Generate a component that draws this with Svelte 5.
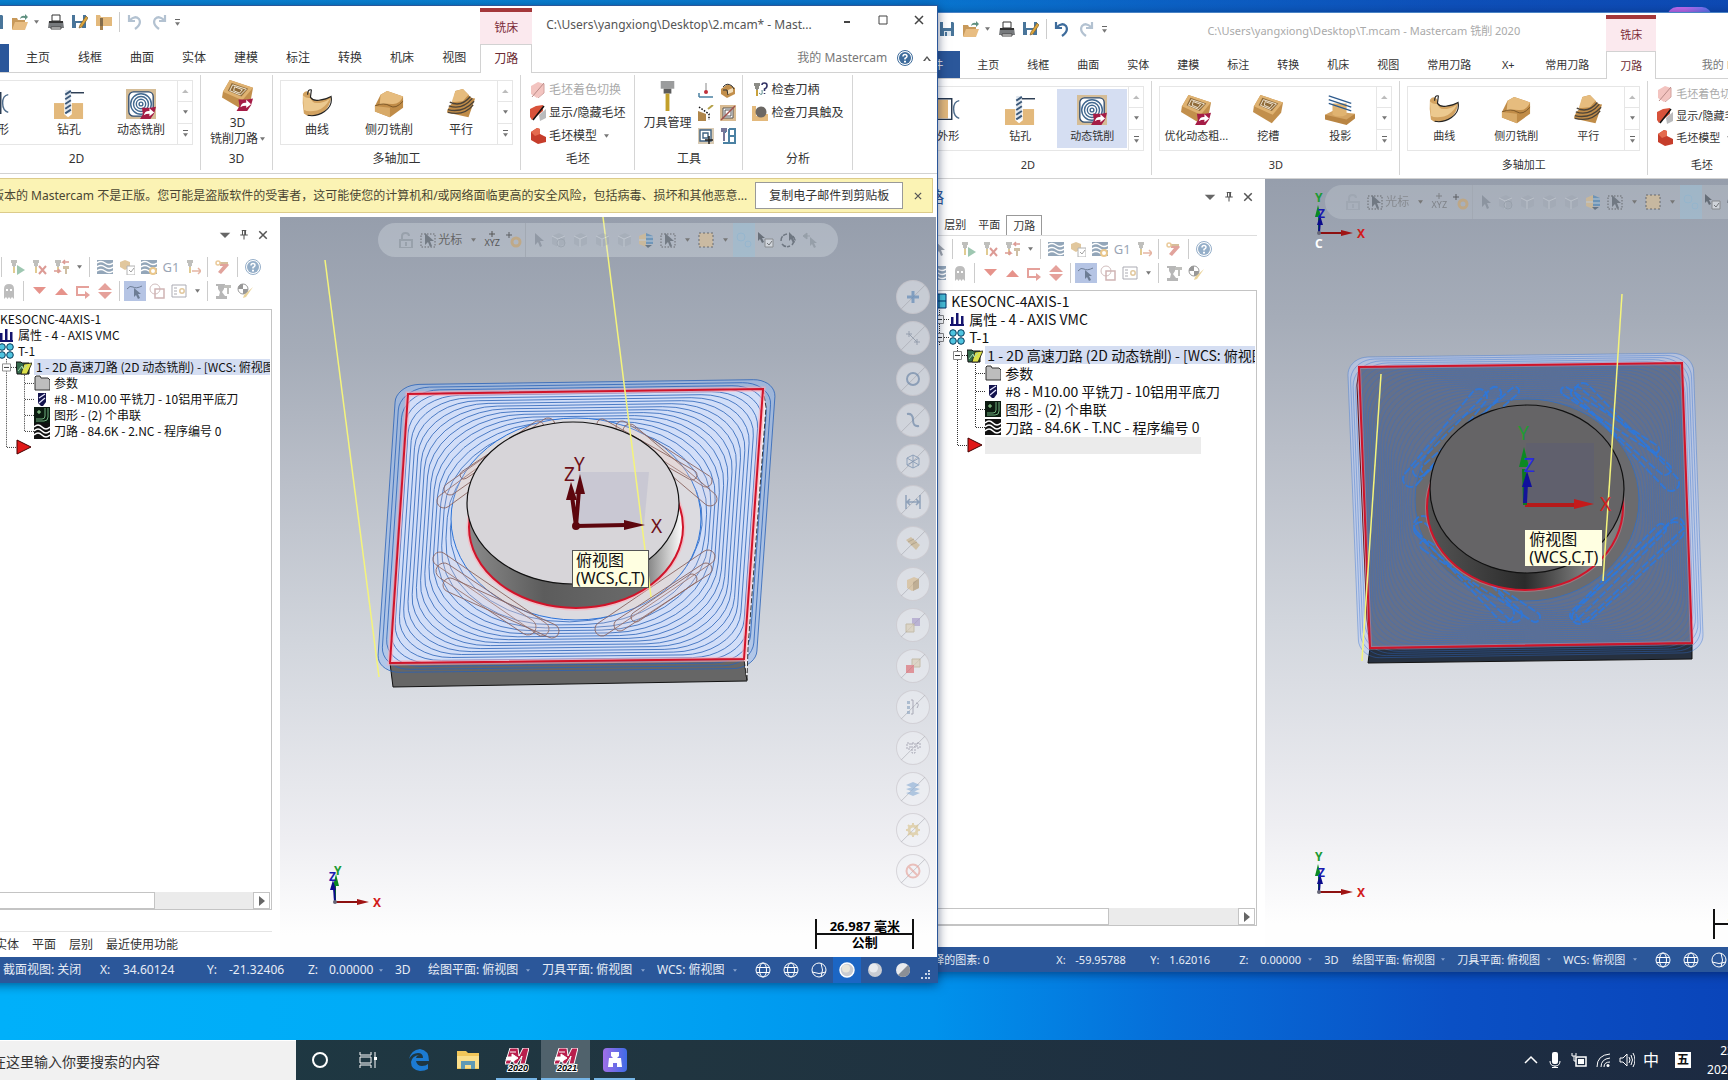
<script>
  const tan = '#e3b97c';
  const badge = '<path d="M17 20h9l6-1-2 7-4 6H15l3-5z" fill="#a51c46"/><path d="M19 28q1-5 6-4.500v-3l5 4.500-5 4v-2.500q-4 0-6 1.500z" fill="#fff"/>';
  const pocket = '<path d="M8 0 32 8 30 19 20 30 0 18 1 12z" fill="#c28f4c"/><path d="M8 0 32 8 21 21 1 12z" fill="#dfb271"/><path d="M10 3 27 9 20 17 6 11z" fill="#8f6b3a"/><path d="M11 5 25 9.500 19 15.500 8 11zM13 7l8 3-3 3.500-6-2.500z" fill="none" stroke="#f3ead8"/>';
  const bit = '<path d="M2 1h6v3H7v3H6v7H4V7H3V4H2z" fill="#8c8c86"/><path d="M4 8h2v6H4z" fill="#c9a13a"/>';
  const waves = '<path d="M0 1h16v14H0z" fill="#3c5f80"/><path d="M0 4q4-3 8 0t8 0M0 8q4-3 8 0t8 0M0 12q4-3 8 0t8 0" fill="none" stroke="#fff" stroke-width="1.500"/>';
  const cube = '<path d="M2 4 9 1l6 3v8l-7 3-6-3z" fill="#9aa3ad"/><path d="M8 7v8M2 4l6 3 7-3" stroke="#dfe3e8" fill="none"/>';
  const pointer = '<path d="M6 1v12l3-3 2 5 2-1-2-5h4z" fill="#5a6470"/>';

  const icons = {
    save: '<path d="M1 1h13l1 1v13H1z" fill="#49759a"/><path d="M4 1h8v6H4z" fill="#fff"/><path d="M5 10h7v5H5z" fill="#dfe8ef"/><path d="M6 11h2v4H6z" fill="#49759a"/>',
    open: '<path d="M0 4h5l1 2h7v3H4l-3 6H0z" fill="#c8995a"/><path d="M3 8h13l-3 8H0z" fill="#e8bd82"/><path d="M8 5q1-4 5-3V0l3 3-3 3V4q-3-1-5 1z" fill="#5f9080"/>',
    print: '<path d="M4 1h8v6H4z" fill="#fff" stroke="#333"/><path d="M1 7h14l1 7H0z" fill="#76797c"/><path d="M1 7h14v2H1z" fill="#333"/><path d="M3 13h10v2H3z" fill="#fff" stroke="#444"/>',
    saveas: '<path d="M0 1h14v13H0z" fill="#49759a"/><path d="M3 1h8v6H3zM4 9h6v5H4z" fill="#fff"/><path d="m14 2 2 2-6 9-3 1 1-3z" fill="#e0a63a" stroke="#7b6336" stroke-width=".7"/>',
    zip: '<path d="M0 1h4l1 2h11v9H0z" fill="#e3b97c"/><path d="M4 4h3v12H4z" fill="#a8834f"/><path d="M4 5h3M4 7h3M4 9h3M4 11h3" stroke="#5f5546"/>',
    undo: '<path d="M2 1v6h6M3 6q5-5 9-1 3 5-4 10" fill="none" stroke="currentColor" stroke-width="2.200"/>',
    redo: '<path d="M14 1v6H8M13 6Q8 1 4 5q-3 5 4 10" fill="none" stroke="#b3c2d1" stroke-width="2.200"/>',
    help: '<circle cx="8" cy="8" r="7.500" fill="#fff" stroke="#3e6c9c"/><circle cx="8" cy="8" r="6" fill="#3e6c9c"/><path d="M6 6.500q0-2 2-2t2 1.800Q10 7.500 8 8.500V9.500" fill="none" stroke="#fff" stroke-width="1.500"/><path d="M7 10.800h2v1.600H7z" fill="#fff"/>',
    pin: '<path d="M5 2h6M6 2v6M10 2v6M9 2v6M3 8h10M8 8v6" fill="none" stroke="#555" stroke-width="1.400"/>',
    cross: '<path d="m3 3 10 10M13 3 3 13" stroke="#555" stroke-width="2"/>',
    caret: '<path d="M1 5h14L8 12z" fill="#666"/>',
    // small ribbon icons
    shade: '<path d="M1 4 8 0l6 2v9l-7 5-6-4z" fill="#f3c4c0"/><path d="M8 16 14 11V2" fill="none" stroke="#d2a29e"/><path d="m2 15 12-14" stroke="#b98b88"/>',
    show: '<path d="M0 4 6 1l7-1v6L2 15l-2-3z" fill="#d8523a"/><path d="m9 10 7-6v9l-6 3z" fill="#b9babc"/><path d="M3 15 14 1" stroke="#111" stroke-width="1.500"/>',
    model: '<path d="M1 4 7 0l3 1v5l6 3v5l-8 2-7-4z" fill="#c63d2b"/><path d="m1 4 6-4 3 1v5L5 8z" fill="#e46a4e"/>',
    probe: '<path d="M1 15h14M1 11v4" stroke="#4b81a3" fill="none" stroke-width="1.500"/><path d="M8 1v8" stroke="#888"/><circle cx="8" cy="10" r="2" fill="#c0303a"/>',
    fixture: '<path d="m1 7 7-5 7 4v6l-8 4-6-4z" fill="#c28f4c"/><path d="M3 5q4-5 9-1l2 3M3 8h4l1 5" stroke="#333" fill="none"/><path d="m8 8 5-2v4l-5 2z" fill="#f1dcb8"/>',
    chamfer: '<path d="m0 6 8 3v7H0z" fill="#b0864a"/><path d="m1 2 10 7v6" stroke="#111" stroke-dasharray="1.500 1.500" fill="none" stroke-width="1.500"/><path d="m10 4 5-4" stroke="#b5a14a" stroke-width="2"/>',
    trim: '<path d="M0 0h16v16H0z" fill="#d9bb92"/><path d="M3 3h10v10H3zM5 5h6v6H5z" fill="#fff" stroke="#555"/><path d="M1 15 15 1" stroke="#a0504a" stroke-width="1.500"/>',
    nest: '<path d="M0 0h16v16H0z" fill="#d9cbb4"/><path d="M2 2h11v11H2zM5 5h5v5H5z" fill="#fff" stroke="#3f6282" stroke-width="1.400"/><path d="M11 8v8M7 12h8" stroke="#222" stroke-width="1.500"/>',
    holder: '<path d="M1 0h6v4H5v9H3V4H1z" fill="#779"/><path d="M5 4h1M9 1h6v14H3M9 1v14M9 8h6" fill="none" stroke="#4b81a3" stroke-width="2"/>',
    checkholder: bit + '<path d="M7 11q4 4 3-3" stroke="#588" fill="none"/><path d="M10 3q0-2 2.500-2T15 3.500 12.500 7v2M12.500 11v1" stroke="#336" stroke-width="1.600" fill="none"/>',
    checkreach: '<path d="M0 1h4v10h4v-2h8v7H0z" fill="#e3b97c"/><circle cx="9" cy="7" r="5.500" fill="#6b6763"/>',
    // manager toolbar
    cursor: pointer,
    regen: bit + '<path d="m8 6 8 5-8 5z" fill="#4f9a72"/>',
    regenx: bit + '<path d="m8 7 7 8M15 7l-7 8" stroke="#c04a40" stroke-width="2"/>',
    regenall: bit + '<path d="M16 3h-6l2-2M10 3l2 2M1 12h6l-2-2M7 12l-2 2" stroke="#c04a40" fill="none" stroke-width="1.500"/><path d="M10 7h6v3h-2v5h-2v-5h-2z" fill="#a88c5a"/>',
    waves,
    verify: '<path d="m1 3 5-2 5 2v5l-5 3-5-3z" fill="#c99a4e"/><path d="M8 7h8v9H8z" fill="#fff" stroke="#777"/><path d="m10 11 2 2 3-4" stroke="#555" fill="none"/>',
    wavegear: waves + '<circle cx="12" cy="12" r="3" fill="#fff" stroke="#d99a2e" stroke-width="2"/>',
    next: bit + '<path d="M7 12h9M13 9l3 3-3 3" stroke="#d07a5a" stroke-width="1.500" fill="none"/>',
    hammer: '<path d="M5 4h7l2 2-8 9-3-2 5-6H5z" fill="#c9584c"/><path d="M5 4h8" stroke="#b58a4a" stroke-width="2"/><circle cx="3" cy="4" r="2" fill="#fff" stroke="#d9a04a" stroke-width="1.500"/>',
    ghost: '<path d="M3 16V6q0-5 5-5t5 5v10l-2-2-1.500 2L8 14l-1.500 2L5 14z" fill="#888"/><path d="M5 6h2v2H5zM9 6h2v2H9z" fill="#fff"/>',
    down: '<path d="M2 4h13L8.500 11z" fill="#d23b2e"/>',
    up: '<path d="M2 12h13L8.500 5z" fill="#d23b2e"/>',
    bracket: '<path d="M14 4H2v8h9" fill="none" stroke="#d0564a" stroke-width="2"/><path d="m10 8 5 4-5 4z" fill="#d0564a"/>',
    updown: '<path d="M1 7h14L8 0zM1 9h14l-7 7z" fill="#d0564a"/>',
    pickpath: '<path d="M0 6q3-4 6-2t9-1" stroke="#345" fill="none"/><path d="M7 5v9l2-2 2 4 2-1-2-4h3z" fill="#345"/>',
    shapes: '<circle cx="6" cy="6" r="5" fill="none" stroke="#a88"/><path d="M6 6h9v9H6z" fill="none" stroke="#a77" stroke-width="1.500"/>',
    listgear: '<path d="M1 2h14v12H1z" fill="none" stroke="#667"/><path d="M3 5h3M3 8h3M3 11h3" stroke="#667"/><circle cx="11" cy="8" r="2.200" fill="none" stroke="#c99a4e" stroke-width="1.500"/>',
    machine: '<path d="M1 1h9v2H9v3l-2 3 3 4h2v3H1v-3h3l1-4-2-3V3H1z" fill="#7d7d7d"/><path d="M9 2h7v3h-2v6h-2V5H9z" fill="#8c8c86"/>',
    measure: '<circle cx="6" cy="6" r="5" fill="#fff" stroke="#444"/><path d="M6 1v5H1q0-5 5-5M6 11V6h5q0 5-5 5" fill="#444"/><path d="m16 4-7 10-3 1 1-3z" fill="#d9b04a"/>',
    // tree
    treemachine: '<path d="M1 1h14v14H1z" fill="#49c3dc" stroke="#036"/><path d="M1 8h14M8 1v14" stroke="#036"/>',
    bars: '<path d="M1 13h14v2H1zM2 6h2.500v8H2zM7 2h2.500v12H7zM12 5h2.500v9H12z" fill="#14146e"/>',
    cells: '<g fill="#4fc4e0" stroke="#063a5a"><circle cx="4" cy="4" r="3.300"/><circle cx="12" cy="4" r="3.300"/><circle cx="4" cy="12" r="3.300"/><circle cx="12" cy="12" r="3.300"/></g>',
    opfolder: '<path d="M0 3h5l1 1h7v11H1z" fill="#346b4c" stroke="#111"/><path d="m8 5 8-1-5 11H5z" fill="#dce04a" stroke="#111" stroke-width=".8"/><path d="M2 12 6 7l1 3 4-4" stroke="#a8d8b0" fill="none"/>',
    folder: '<path d="M1 4V2l1-1h4l1 2h7l2 2v10H1z" fill="#bdbdbd" stroke="#333"/>',
    tool: '<path d="M4 2h8v9l-3 4H7l-3-3z" fill="#14144e"/><path d="m5 7 6-4M5 12l6-5" stroke="#e8e8ff" stroke-width="1.200"/>',
    geometry: '<path d="M0 0h16v16H0z" fill="#0b1a10"/><path d="M11 1v8q0 3-3 3H2M14 1v9q0 4-4 4H2" stroke="#6fae7c" fill="none"/><path d="M3 5h4M5 3v4" stroke="#9d9"/>',
    nc: '<path d="M0 0h16v16H0z" fill="#111"/><path d="M0 4q4-4 8 0t8 0M0 8q4-4 8 0t8 0M0 12q4-4 8 0t8 0" fill="none" stroke="#fff" stroke-width="1.600"/>',
    insert: '<path d="m1 1 14 7-14 7z" fill="#e11818" stroke="#400"/>',
    // selection bar
    lock: '<path d="M4 8V4q0-3 3.500-3T11 4M2 8h12v8H2z" fill="none" stroke="#8d96a0" stroke-width="2"/><path d="M7 10h2v4H7z" fill="#8d96a0"/>',
    boxcursor: '<path d="M1 2h14v13H1z" fill="none" stroke="#444" stroke-dasharray="1.500 1.500"/><path d="M5 1v12l3-3 2 5 2-1-2-5h4z" fill="#555d66"/>',
    plusgear: '<path d="M3 0v6M0 3h6" stroke="#333"/><circle cx="10" cy="10" r="4" fill="none" stroke="#c9a36a" stroke-width="3"/>',
    wand: pointer,
    cubeA: cube,
    cubeoff: cube + '<circle cx="11" cy="11" r="4" fill="none" stroke="#7d8790"/>',
    cubecolor: '<path d="m1 4 7-3v7H1zM1 8h7v7l-7-3z" fill="#d8bb8a"/><path d="m8 1 7 3v8H8z" fill="#4f86b5"/><path d="M8 5h7M8 9h7M1 8h7" stroke="#c9d8e5"/><path d="M7 13h7l-4 3z" fill="#456"/>',
    selrect: '<path d="M1 1h14v14H1z" fill="#d9bd92" stroke="#444" stroke-dasharray="2 2"/>',
    faint: '<circle cx="5" cy="5" r="4" fill="none" stroke="#8fb5d0"/><circle cx="12" cy="12" r="3" fill="none" stroke="#8fb5d0"/>',
    validate: '<path d="M0 0v9l2-2 2 4 2-1-2-4h3z" fill="#444c55"/><path d="M7 7h8v8H7z" fill="#e4e7ea" stroke="#777"/><path d="m9 11 2 2 3-4" stroke="#555" fill="none"/>',
    cycle: '<path d="M1 9q0-6 6-7M2 12q3 4 8 2M13 4l2 4-3 5" stroke="#4d5660" fill="none" stroke-width="1.500" stroke-dasharray="5 1"/><path d="M9 0v9l2-2 2 4 2-1-2-4h2z" fill="#4d5660"/>',
    back: '<path d="m1 4 4-3v6zM4 4h4" fill="#8a939c" stroke="#8a939c"/><path d="M8 5v9l2-2 2 4 2-1-2-4h3z" fill="#8a939c"/>',
    // quick masks
    plus: '<path d="M8 2v12M2 8h12" stroke="#5d86b5" stroke-width="3"/>',
    line: '<path d="m4 4 8 8M1 4h6M4 1v6M9 12h6M12 9v6" stroke="#7a8698"/>',
    arc: '<circle cx="8" cy="8" r="6" fill="none" stroke="#6a84a5" stroke-width="2"/>',
    spline: '<path d="M2 2q6-1 6 6t6 6" fill="none" stroke="#6a84a5" stroke-width="2"/>',
    wire: '<path d="m2 5 6-3 6 3v7l-6 3-6-3zM2 5l12 7M14 5 2 12M8 2v13" fill="none" stroke="#6a84a5"/>',
    dim: '<path d="M1 1v14M15 1v14M2 8h12M5 5 2 8l3 3M11 5l3 3-3 3" fill="none" stroke="#6a84a5" stroke-width="1.500"/>',
    surf: '<path d="m1 5 5-3 9 8-4 5z" fill="#c9b187"/><path d="m3 7 6-3M6 10l6-3" stroke="#a08a60"/>',
    solid: '<path d="m2 4 7-3 5 2v9l-7 3-5-3z" fill="#d6b98c"/><path d="m8 6 6-3v9l-6 3z" fill="#b0946a"/>',
    maskA: '<path d="M7 1h8v8H7z" fill="#a79bc9"/><path d="M1 7h8v8H1z" fill="#d9cdb5" stroke="#b5a888"/>',
    maskB: '<path d="M7 1h8v8H7z" fill="#d9cdb5" stroke="#b5a888"/><path d="M1 7h8v8H1z" fill="#dd6a70"/>',
    group: '<path d="M2 2h3v3H2zM2 7h3v3H2zM2 12h3v3H2z" fill="#8fa6c0"/><path d="M6 1h2v14H6M11 4q4 0 1 5" stroke="#889" fill="none"/>',
    result: '<path d="M2 3h3v6H2zM7 3h3v10H7zM12 3h3v5h-3z" fill="none" stroke="#889" stroke-dasharray="2 1"/>',
    level: '<path d="m1 4 7-3 7 3-7 3zM1 8l7-2 7 2-7 3zM1 12l7-2 7 2-7 3z" fill="#8fb0d6"/>',
    gear: '<circle cx="8" cy="8" r="4" fill="none" stroke="#d9c48f" stroke-width="3"/><path d="M8 1v3M8 12v3M1 8h3M12 8h3M3 3l2 2M11 11l2 2M13 3l-2 2M5 11l-2 2" stroke="#d9c48f" stroke-width="2"/>',
    clear: '<circle cx="8" cy="8" r="6.500" fill="none" stroke="#e5a49c" stroke-width="2"/><path d="m3.500 3.500 9 9" stroke="#e5a49c" stroke-width="2"/>',
    // shading modes
    globe: '<circle cx="8" cy="8" r="7" fill="none" stroke="#fff"/><ellipse cx="8" cy="8" rx="3.500" ry="7" fill="none" stroke="#fff"/><path d="M1.500 5.500h13M1.500 10.500h13" stroke="#fff"/>',
    halfglobe: '<circle cx="8" cy="8" r="7" fill="none" stroke="#fff"/><path d="M10 1q3 7 0 14M1 10q7 3 14 0" stroke="#fff" fill="none"/>',
    ball: '<circle cx="8" cy="8" r="7" fill="#c9ccd2"/><circle cx="6.500" cy="6" r="4.500" fill="#e9ebee"/>',
    ballring: '<circle cx="8" cy="8" r="7" fill="#c9ccd2" stroke="#fff" stroke-width="1.500"/><circle cx="7" cy="6.500" r="4" fill="#e9e6dc"/>',
    ballcut: '<circle cx="8" cy="8" r="7" fill="#e9ebee"/><path d="M13 3a7 7 0 0 1-10 10z" fill="#8b8f96"/>',
  };

  const bigIcons = {
    contour: `<path d="M0 5h16v20H0z" fill="${tan}"/><path d="M0 4h20v22H0" fill="none" stroke="#24364d" stroke-width="1.500"/><path d="M28 6q-6 1-6 9t6 10" fill="none" stroke="#4c6a8a" stroke-width="1.500"/>`,
    drill: `<path d="M0 15h31v17H0z" fill="${tan}"/><path d="M11 15h8v12l-4 3-4-3z" fill="#fff"/><path d="M12 1h6v25h-6z" fill="#dfe6ee"/><path d="m12 6 6-4M12 11l6-4M12 16l6-4M12 21l6-4M12 26l6-4" stroke="#3b5878" stroke-width="2"/><path d="M18 4h14" stroke="#24364d" stroke-width="1.500"/>`,
    dynamic: '<path d="M0 0h32v32H0z" fill="#d5bd97"/><rect x="3" y="3" width="26" height="26" rx="5" fill="#fff" stroke="#2c4a6e" stroke-width="1.400"/><g fill="none" stroke="#41688f" stroke-width="1.500"><circle cx="16" cy="16" r="11"/><circle cx="16" cy="16" r="8"/><circle cx="16" cy="16" r="5"/><circle cx="16" cy="16" r="2"/></g>' + badge,
    rough: pocket + badge,
    pocket,
    project: '<path d="m0 21 8-4 24 3-9 11-23-6z" fill="#d3a362"/><path d="m0 21 23 5 9-6v5l-9 7-23-6z" fill="#b98543"/><path d="M8 9h15v12q-8 4-15 0z" fill="#e0b370"/><path d="M4 1l24 8M4 5l24 8M4 9l24 8" stroke="#2d5a8c" stroke-width="1.300"/>',
    curve: '<path d="M1 5q4-5 8 0 0 6 5 7 9 0 17-4-1 16-16 20-9 2-13-2Q0 15 1 5z" fill="#d2a260"/><path d="M1 7q5 4 8 2 2 6 6 6 8 0 15-5-5 10-14 13Q6 25 2 22z" fill="#ecc98f"/><path d="M6 6q0-6 4-5l-1 8q3 4 9 3 8-1 13-4 2 10-7 16-9 6-18 4" fill="none" stroke="#222" stroke-width="1.200"/>',
    swarf: '<path d="m7 6 7-4 17 6v12l-14 10L1 24v-6z" fill="#c08c48"/><path d="m7 6 7-4 17 6q-4 9-12 8T6 17z" fill="#e6bc7e"/><path d="M1 18q10-4 16 0t14-5" fill="none" stroke="#7a5526"/><path d="m1 24 16 6V20L1 18z" fill="#d8aa68"/>',
    parallel: '<path d="m10 2 8-2 6 6q2 4 7 4L24 30 1 25q1-6 6-10z" fill="#c08c48"/><path d="m10 2 8-2 6 6-6 7-12 1z" fill="#e6bc7e"/><path d="M4 14q12 6 22-6M3 18q14 5 25-8M2 22q16 4 28-9M2 25q18 4 27-8" fill="none" stroke="#4c4338" stroke-width="1.400"/>',
    toolmgr: '<path d="M9 1h14v8H9z" fill="#9b9c9d"/><path d="M12 9h8v5h-8z" fill="#5c5c5c"/><path d="M14 14h4v18h-4z" fill="#c3a02b"/>',
  };

  const gallery2d = [['contour', '外形'], ['drill', '钻孔'], ['dynamic', '动态铣削']];
  const gallery3d = [['rough', '优化动态粗...'], ['pocket', '挖槽'], ['project', '投影']];
  const galleryMulti = [['curve', '曲线'], ['swarf', '侧刃铣削'], ['parallel', '平行']];
  const stock = [['shade', '毛坯着色切换'], ['show', '显示/隐藏毛坯'], ['model', '毛坯模型']];
  const frontTabs = ['主页', '线框', '曲面', '实体', '建模', '标注', '转换', '机床', '视图'];
  const backTabs = [...frontTabs, '常用刀路', 'X+', '常用刀路'];

  const managerRows = [
    ['cursor', '|', 'regen', 'regenx', 'regenall', 'v', '|', 'waves', 'verify', 'wavegear', 'G1', 'next', '|', 'hammer', '|', 'help'],
    ['waves', 'ghost', '|', 'down', 'up', 'bracket', 'updown', '|', 'pickpath', 'shapes', 'listgear', 'v', '|', 'machine', 'measure'],
  ];
  const selectionTools = ['wand', 'cubeoff', 'cubeA', 'cubeA', 'cubeA', 'cubecolor', 'boxcursor', 'v', 'selrect', 'v', 'faint', 'validate', 'cycle', 'back'];
  const masks = ['plus', 'line', 'arc', 'spline', 'wire', 'dim', 'surf', 'solid', 'maskA', 'maskB', 'group', 'result', 'level', 'gear', 'clear'];

  function treeRows(file) {
    return [
      { guides: [], icon: 'treemachine', text: 'KESOCNC-4AXIS-1' },
      { guides: ['box'], icon: 'bars', text: '属性 - 4 - AXIS VMC' },
      { guides: ['box'], icon: 'cells', text: 'T-1' },
      { guides: ['', 'box'], icon: 'opfolder', text: '1 - 2D 高速刀路 (2D 动态铣削) - [WCS: 俯视图] - [刀具面: 俯视图]', hot: true },
      { guides: ['', 'v', 't'], icon: 'folder', text: '参数' },
      { guides: ['', 'v', 't'], icon: 'tool', text: '#8 - M10.00 平铣刀 - 10铝用平底刀' },
      { guides: ['', 'v', 't'], icon: 'geometry', text: '图形 - (2) 个串联' },
      { guides: ['', 'v', 'l'], icon: 'nc', text: `刀路 - 84.6K - ${file}.NC - 程序编号 0` },
      { guides: ['', 'l'], icon: 'insert', text: '' },
    ];
  }

  const frontStatus = [
    ['截面视图: 关闭', 97], ['X:', 23], ['34.60124', 84], ['Y:', 22], ['-21.32406', 79], ['Z:', 21], ['0.00000', 50, true],
    ['3D', 33], ['绘图平面: 俯视图', 98, true], ['刀具平面: 俯视图', 99, true], ['WCS: 俯视图', 76, true],
  ];
  const backStatus = [
    ['选择的图素: 0', 134], ['X:', 19], ['-59.95788', 75], ['Y:', 19], ['1.62016', 70], ['Z:', 21], ['0.00000', 48, true],
    ['3D', 28], ['绘图平面: 俯视图', 89, true], ['刀具平面: 俯视图', 90, true], ['WCS: 俯视图', 70, true],
  ];

  // Maps plate space (-1..1 on both axes) to the drawn quad.
  function project([tl, tr, br, bl], u, v) {
    const a = (u + 1) / 2;
    const b = (v + 1) / 2;
    return [0, 1].map((i) => (tl[i] * (1 - a) + tr[i] * a) * (1 - b) + (bl[i] * (1 - a) + br[i] * a) * b);
  }

  function roundedLoop(quad, size, radius) {
    const pts = [];
    const c = size - radius;
    for (const [sx, sy, start] of [[1, 1, 0], [-1, 1, 90], [-1, -1, 180], [1, -1, 270]]) {
      for (let k = 0; k <= 9; k++) {
        const ang = ((start + k * 10) * Math.PI) / 180;
        const p = project(quad, sx * c + radius * Math.cos(ang), sy * c + radius * Math.sin(ang));
        pts.push(p.map((n) => n.toFixed(1)).join(' '));
      }
    }
    return 'M' + pts.join('L') + 'Z';
  }

  function loops(quad, count, inner, outer) {
    return Array.from({ length: count }, (_, i) => {
      const t = i / (count - 1);
      const size = inner + (outer - inner) * t;
      return roundedLoop(quad, size, size * (1 - Math.pow(t, 0.75) * 0.88));
    });
  }

  function capsule([x1, y1, x2, y2, r]) {
    const d = Math.hypot(x2 - x1, y2 - y1);
    const nx = (-(y2 - y1) / d) * r;
    const ny = ((x2 - x1) / d) * r;
    return `M${x1 + nx} ${y1 + ny}L${x2 + nx} ${y2 + ny}A${r} ${r} 0 0 0 ${x2 - nx} ${y2 - ny}L${x1 - nx} ${y1 - ny}A${r} ${r} 0 0 0 ${x1 + nx} ${y1 + ny}Z`;
  }

  const quadA = [[128, 177], [483, 172], [464, 442], [110, 446]];
  const sceneA = {
    id: 'a', quad: quadA, front: '110,446 464,442 467,464 113,470', edge: '483,172 486,190 468,430 467,464 464,442',
    loops: loops(quadA, 18, 0.71, 1.07), ring: [296, 302, 125, 101], base: [296, 310, 107, 81], top: [293, 286, 106, 81],
    plane: '299,255 369,255 364,308 297,308',
    links: [
      [164, 284, 268, 208, 7], [170, 272, 258, 210, 6], [184, 258, 244, 218, 4],
      [342, 210, 426, 264, 6], [350, 214, 430, 282, 7], [322, 207, 412, 258, 5],
      [160, 342, 262, 412, 7], [164, 354, 248, 410, 8], [170, 368, 272, 414, 7],
      [322, 412, 428, 340, 7], [340, 408, 426, 352, 6], [356, 400, 412, 362, 5],
    ].map(capsule),
    rapids: ['323,0 371,380', '45,43 99,460'],
  };
  const quadB = [[94, 188], [417, 184], [427, 464], [105, 469]];
  const sceneB = {
    id: 'b', quad: quadB, front: '105,469 427,464 427,480 103,484', edge: '94,188 92,206 102,440 105,469',
    loops: loops(quadB, 26, 0.71, 1.07), ring: [262, 321, 112, 101], base: [260, 328, 98, 83], top: [262, 310, 97, 84],
    plane: '261,264 329,264 329,324 261,324',
    links: [
      [154, 292, 230, 214, 6], [146, 300, 214, 218, 8], [160, 290, 250, 212, 4],
      [312, 214, 400, 290, 6], [318, 212, 406, 304, 8], [300, 212, 390, 270, 4],
      [156, 350, 250, 436, 7], [158, 346, 240, 434, 9], [160, 366, 270, 438, 5],
      [314, 438, 412, 346, 7], [320, 434, 410, 352, 9], [310, 436, 396, 350, 5],
    ].map(capsule),
    rapids: ['357,115 338,402', '116,195 97,482'],
  };

  const frontTree = treeRows('2');
  const backTree = treeRows('T');
</script>

{#snippet icon(name)}
  <svg class="ico" viewBox="0 0 16 16" aria-hidden="true">{@html icons[name]}</svg>
{/snippet}

{#snippet drop()}
  <svg class="drop" viewBox="0 0 6 4" aria-hidden="true"><path d="M0 0h6L3 4z" fill="currentColor" /></svg>
{/snippet}

{#snippet gallery(items, label, hot)}
  <section class="group">
    <div class="body">
      <div class="gallery">
        {#each items as [name, text]}
          <button class="cell" class:hot={hot === name}>
            <svg viewBox="0 0 32 32" aria-hidden="true">{@html bigIcons[name]}</svg>
            <span>{text}</span>
          </button>
        {/each}
        <div class="scroller">
          <button aria-label="上一行" class="dim">{@render icon('up')}</button>
          <button aria-label="下一行">{@render drop()}</button>
          <button aria-label="更多"><i></i>{@render drop()}</button>
        </div>
      </div>
    </div>
    <h3>{label}</h3>
  </section>
{/snippet}

{#snippet stockGroup()}
  <section class="group">
    <div class="body rows">
      {#each stock as [name, text]}
        <button class="row" disabled={name === 'shade'}>{@render icon(name)}<span>{text}</span>{#if name === 'model'}{@render drop()}{/if}</button>
      {/each}
    </div>
    <h3>毛坯</h3>
  </section>
{/snippet}

{#snippet quick(full)}
  <div class="quick" class:full>
    <button aria-label="保存">{@render icon('save')}</button>
    <button aria-label="打开" class="wide">{@render icon('open')}{@render drop()}</button>
    <button aria-label="打印">{@render icon('print')}</button>
    <button aria-label="另存为">{@render icon('saveas')}</button>
    {#if full}<button aria-label="压缩">{@render icon('zip')}</button>{/if}
    <i class="sep"></i>
    <button aria-label="撤销" class="undo">{@render icon('undo')}</button>
    <button aria-label="重做">{@render icon('redo')}</button>
    <button aria-label="自定义" class="more"><i></i>{@render drop()}</button>
  </div>
{/snippet}

{#snippet ribbonTabs(tabs)}
  <nav class="tabs">
    <button class="file">文件</button>
    {#each tabs as t}<button>{t}</button>{/each}
  </nav>
{/snippet}

{#snippet account()}
  <div class="account">
    <a href="#account">我的 Mastercam</a>
    <button aria-label="帮助">{@render icon('help')}</button>
    <button aria-label="折叠功能区">
      <svg class="fold" viewBox="0 0 8 5" aria-hidden="true"><path d="M0 5 4 0l4 5H6L4 2 2 5z" fill="#555" /></svg>
    </button>
  </div>
{/snippet}

{#snippet manager(rows, title, tabs)}
  <aside class="manager">
    <header>
      <h2>{title}</h2>
      <button aria-label="窗口位置">{@render icon('caret')}</button>
      <button aria-label="自动隐藏">{@render icon('pin')}</button>
      <button aria-label="关闭面板">{@render icon('cross')}</button>
    </header>
    {#if tabs}
      <div class="paneltabs top">
        {#each tabs as t}<button class:active={t === '刀路'}>{t}</button>{/each}
      </div>
    {/if}
    <div class="tools">
      {#each managerRows as line}
        <div>
          {#each line as name}
            {#if name === '|'}<i class="sep"></i>
            {:else if name === 'v'}<span class="arrow">{@render drop()}</span>
            {:else if name === 'G1'}<button class="g1">G1</button>
            {:else}<button aria-label={name} class:hot={name === 'pickpath'}>{@render icon(name)}</button>{/if}
          {/each}
        </div>
      {/each}
    </div>
    <div class="tree">
      <ul>
        {#each rows as r}
          <li>
            {#each r.guides as g}
              <svg class="guide" viewBox="0 0 18 18" preserveAspectRatio="none" aria-hidden="true">
                {#if g}
                  <g stroke="#333" stroke-dasharray="1 1" fill="none">
                    <path d={g === 'l' ? 'M8.500 0V9' : 'M8.500 0V18'} />
                    <path d="M9 9.500H18" class:off={g === 'v'} />
                  </g>
                {/if}
                {#if g === 'box'}
                  <path d="M4.500 5.500h8v8h-8z" fill="#fff" stroke="#888" /><path d="M6 9.500h5" stroke="#333" />
                {/if}
              </svg>
            {/each}
            {@render icon(r.icon)}
            <span class:hot={r.hot} class:blank={!r.text}>{r.text}</span>
          </li>
        {/each}
      </ul>
      <div class="hscroll"><i class="thumb"></i><i class="track"></i><button aria-label="向右滚动"><svg viewBox="0 0 6 10"><path d="M0 0v10l6-5z" fill="#666" /></svg></button></div>
    </div>
    {#if !tabs}
      <div class="paneltabs">
        {#each ['刀路', '实体', '平面', '层别', '最近使用功能'] as t}<button>{t}</button>{/each}
      </div>
    {/if}
  </aside>
{/snippet}

{#snippet selectionBar()}
  <div class="selbar">
    <button aria-label="锁定">{@render icon('lock')}</button>
    <button class="cursor">{@render icon('boxcursor')}<span>光标</span></button>
    <span class="arrow">{@render drop()}</span>
    <button class="xyz"><svg viewBox="0 0 6 6" aria-hidden="true"><path d="M3 0v6M0 3h6" stroke="#555" /></svg>XYZ</button>
    <button aria-label="自动抓点设置">{@render icon('plusgear')}</button>
    {#each selectionTools as name, i}
      {#if name === 'v'}<span class="arrow">{@render drop()}</span>
      {:else}<button aria-label="选择工具 {i + 1}" class:first={i === 0} class:hot={name === 'faint'} class:soft={name.startsWith('cubeA') || name === 'cubeoff' || name === 'wand'}>{@render icon(name)}</button>{/if}
    {/each}
  </div>
{/snippet}

{#snippet triad(x, y, lean, label)}
  <g class="triad" transform="translate({x} {y})">
    <path d="M0 0V-{lean ? 18 : 20}" stroke="#0a7a1e" stroke-width="2" />
    <path d="M{lean ? 1 : -1} -28l3 12h-6z" fill="#0a8a22" />
    <path d="M0 0l{lean ? -1 : 1} -14" stroke="#0b0b8c" stroke-width="2" />
    <path d="M{lean ? -2 : 1} -{lean ? 22 : 18}l3 10h-6z" fill="#0b0b8c" />
    <path d="M0 0H22" stroke="#8c1010" stroke-width="2" />
    <path d="M34 0 22 3v-6z" fill="#a01414" />
    <circle r="2" fill="#667" />
    <text x="38" y="5" fill="#d21a1a">X</text>
    <text x={lean ? -1 : -4} y={lean ? -27 : -31} fill="#1b9a32">Y</text>
    <text x={lean ? -6 : -1} y={lean ? -21 : -15} fill="#1a1ab0">Z</text>
    {#if label}<text x="-4" y="15" fill="#fff">{label}</text>{/if}
  </g>
{/snippet}

{#snippet part(s)}
  <defs>
    <linearGradient id="side-{s.id}">
      {#if s.id === 'a'}
        <stop offset="0" stop-color="#8a8a8a" /><stop offset=".35" stop-color="#5c5c5c" /><stop offset=".8" stop-color="#6a6a6a" /><stop offset="1" stop-color="#fff" />
      {:else}
        <stop offset="0" stop-color="#555" /><stop offset=".5" stop-color="#2b2b2b" /><stop offset=".85" stop-color="#8a8a8a" /><stop offset="1" stop-color="#777" />
      {/if}
    </linearGradient>
  </defs>
  <g class="part {s.id}">
    <path class="halo" d={s.loops[s.loops.length - 1]} />
    <polygon class="plate" points={s.quad.join(' ')} />
    <polygon class="front" points={s.front} />
    {#each s.loops as d}<path class="loop" {d} />{/each}
    <polyline class="edge" points={s.edge} />
    <polygon class="glow" points={s.quad.join(' ')} />
    <polygon class="chain" points={s.quad.join(' ')} fill="none" />
    <ellipse class="ring" cx={s.ring[0]} cy={s.ring[1]} rx={s.ring[2]} ry={s.ring[3]} />
    {#each s.links as d}<path class="link" {d} />{/each}
    <ellipse class="glow" cx={s.base[0]} cy={s.base[1]} rx={s.base[2]} ry={s.base[3]} />
    <ellipse class="chain" cx={s.base[0]} cy={s.base[1]} rx={s.base[2]} ry={s.base[3]} fill="url(#side-{s.id})" />
    <ellipse class="cap" cx={s.top[0]} cy={s.top[1]} rx={s.top[2]} ry={s.top[3]} />
    <polygon class="gview" points={s.plane} />
    {#each s.rapids as pts}<polyline class="rapid" points={pts} />{/each}
  </g>
{/snippet}

{#snippet status(items)}
  <footer class="status">
    {#each items as [text, w, menu]}
      <span style:width="{w}px">{text}</span>{#if menu}<span class="arrow">{@render drop()}</span>{/if}
    {/each}
    {#each ['globe', 'globe', 'halfglobe', 'ballring', 'ball', 'ballcut'] as name, i}
      <button aria-label="着色 {i + 1}" class:hot={i === 3}>{@render icon(name)}</button>
    {/each}
    <svg class="grip" viewBox="0 0 9 9" aria-hidden="true"><path d="M7 0h2v2H7zM4 3h2v2H4zM7 3h2v2H7zM0 7h2v2H0zM4 7h2v2H4zM7 7h2v2H7z" fill="#c9d5e8" /></svg>
  </footer>
{/snippet}

<div class="desktop">
  <div class="floater"></div>

  <article class="win back">
    <div class="head">
      <div class="caption">{@render quick(false)}<h1>C:\Users\yangxiong\Desktop\T.mcam - Mastercam 铣削 2020</h1></div>
      <div class="context">铣床</div>
      <div></div>
      {@render ribbonTabs(backTabs)}
      <button class="current">刀路</button>
      {@render account()}
    </div>
    <div class="ribbon">
      {@render gallery(gallery2d, '2D', 'dynamic')}
      {@render gallery(gallery3d, '3D')}
      {@render gallery(galleryMulti, '多轴加工')}
      {@render stockGroup()}
    </div>
    <div class="work">
      {@render manager(backTree, '刀路', ['实体', '层别', '平面', '刀路'])}
      <main class="view">
        <svg class="scene" role="img" aria-label="零件与刀路">
          {@render triad(54, 54, false, 'C')}
          {@render triad(54, 713, false)}
          {@render part(sceneB)}
          <g stroke-width="4">
            <path d="M260 326h50" stroke="#b51a1a" /><path d="m329 325-20 5v-10z" fill="#c51a1a" />
            <path d="M260 326 259 290" stroke="#0d7a20" /><path d="m259 268 5 20h-10z" fill="#0c8a22" />
            <path d="m260 324 1-20" stroke="#14149a" /><path d="m262 292 5 16h-10z" fill="#10109c" />
          </g>
          <g class="axis"><text x="335" y="332" fill="#d22020">X</text><text x="253" y="261" fill="#1f9a32">Y</text><text x="259" y="293" fill="#2a2ae0">Z</text></g>
        </svg>
        {@render selectionBar()}
        <p class="tip">俯视图<br />(WCS,C,T)</p>
        <div class="scale"><b>26.987 毫米</b><b>公制</b></div>
      </main>
    </div>
    {@render status(backStatus)}
  </article>

  <article class="win fore">
    <div class="head">
      <div class="caption">{@render quick(true)}</div>
      <div class="context">铣床</div>
      <div class="caption">
        <h1>C:\Users\yangxiong\Desktop\2.mcam* - Mast...</h1>
        <div class="sys">
          <button aria-label="最小化"><svg viewBox="0 0 10 10"><path d="M2 7h6" stroke="#444" stroke-width="2" /></svg></button>
          <button aria-label="最大化"><svg viewBox="0 0 10 10"><path d="M1 1h8v8H1z" fill="none" stroke="#444" /></svg></button>
          <button aria-label="关闭"><svg viewBox="0 0 10 10"><path d="m1 1 8 8M9 1 1 9" stroke="#444" stroke-width="1.500" /></svg></button>
        </div>
      </div>
      {@render ribbonTabs(frontTabs)}
      <button class="current">刀路</button>
      {@render account()}
    </div>
    <div class="ribbon">
      {@render gallery(gallery2d, '2D')}
      <section class="group">
        <div class="body">
          <button class="tall">
            <svg viewBox="0 0 32 32" aria-hidden="true">{@html bigIcons.rough}</svg>
            <span>3D</span>
            <span>铣削刀路{@render drop()}</span>
          </button>
        </div>
        <h3>3D</h3>
      </section>
      {@render gallery(galleryMulti, '多轴加工')}
      {@render stockGroup()}
      <section class="group">
        <div class="body toolset">
          <button class="tall"><svg viewBox="0 0 32 32" aria-hidden="true">{@html bigIcons.toolmgr}</svg><span>刀具管理</span></button>
          <div class="mini">
            {#each ['probe', 'fixture', 'chamfer', 'trim', 'nest', 'holder'] as name}<button aria-label={name}>{@render icon(name)}</button>{/each}
          </div>
        </div>
        <h3>工具</h3>
      </section>
      <section class="group">
        <div class="body rows">
          <button class="row">{@render icon('checkholder')}<span>检查刀柄</span></button>
          <button class="row">{@render icon('checkreach')}<span>检查刀具触及</span></button>
        </div>
        <h3>分析</h3>
      </section>
    </div>
    <div class="notice">
      <p>此版本的 Mastercam 不是正版。您可能是盗版软件的受害者，这可能使您的计算机和/或网络面临更高的安全风险，包括病毒、损坏和其他恶意...</p>
      <button>复制电子邮件到剪贴板</button>
      <button class="dismiss" aria-label="关闭提示">{@render icon('cross')}</button>
    </div>
    <div class="work">
      {@render manager(frontTree, '')}
      <main class="view">
        <svg class="scene" role="img" aria-label="零件与刀路">
          {@render triad(55, 685, true)}
          {@render part(sceneA)}
          <g stroke="#5d060e" fill="#5d060e" stroke-width="4">
            <circle cx="296" cy="309" r="2" /><path d="m296 309 50-1" /><path stroke="none" d="m365 308-21 5v-10z" />
            <path d="m296 309 3-36M296 309l-4-30" /><path stroke="none" d="m300 257 5 20h-10zM291 265l6 18h-11z" />
          </g>
          <g class="axis" fill="#6d1018"><text x="371" y="316">X</text><text x="294" y="254">Y</text><text x="284" y="264">Z</text></g>
        </svg>
        {@render selectionBar()}
        <div class="masks">
          {#each masks as name}<button aria-label={name}>{@render icon(name)}</button>{/each}
        </div>
        <p class="tip">俯视图<br />(WCS,C,T)</p>
        <div class="scale"><b>26.987 毫米</b><b>公制</b></div>
      </main>
    </div>
    {@render status(frontStatus)}
  </article>

  <div class="taskbar">
    <label class="search"><input type="text" placeholder="在这里输入你要搜索的内容" aria-label="搜索" /></label>
    <button aria-label="Cortana"><svg viewBox="0 0 24 24"><circle cx="11" cy="12" r="7" fill="none" stroke="#fff" stroke-width="2" /></svg></button>
    <button aria-label="任务视图"><svg viewBox="0 0 24 24"><path d="M2 4v3h11V4M2 20v-3h11v3M2 9h11v6H2zM17 4v16" fill="none" stroke="#fff" /><path d="M16 9h3v3h-3z" fill="#fff" /></svg></button>
    <button aria-label="Edge"><svg viewBox="0 0 24 24"><path d="M2 11Q4 2 13 1q9 1 9 12H9q1 5 6 5 4 0 6-2v5q-3 2-8 2-9-1-9-9 1-6 8-7-3 1-3 3h7q0-5-5-5-6 0-9 6z" fill="#1c7bd3" /></svg></button>
    <button aria-label="文件资源管理器"><svg viewBox="0 0 24 24"><path d="M1 3h9l2 2h11v16H1z" fill="#f2c75a" /><path d="M1 8h22v12H1z" fill="#fbdf8b" /><path d="M5 21v-8h14v8h-4v-4H9v4z" fill="#5f9ab5" /></svg></button>
    {#each ['2020', '2021'] as year}
      <button class="open" class:active={year === '2021'} aria-label="Mastercam {year}">
        <svg viewBox="0 0 24 24">
          <path d="M5 0h8l1 8 4-8h6l-4 16h-5l2-8-5 8h-3L8 9 5 16H0z" fill="#b81f4d" stroke="#fff" />
          <path d="M2 9h5V6l6 4-6 4v-2H1zM5 4h6" fill="#fff" stroke="#fff" />
          <text x="3" y="23">{year}</text>
        </svg>
      </button>
    {/each}
    <button class="open" aria-label="录屏">
      <svg viewBox="0 0 24 24"><defs><linearGradient id="rec"><stop stop-color="#a06fe8" /><stop offset="1" stop-color="#3f6be6" /></linearGradient></defs><rect width="24" height="24" rx="4" fill="url(#rec)" /><path d="M8 4h8v4l-2 2h4l1 9h-5v-4h-4v4H5l1-9h4L8 8z" fill="#fff" /></svg>
    </button>
    <div class="tray">
      <svg viewBox="0 0 16 16"><path d="m2 11 6-6 6 6" fill="none" stroke="#fff" stroke-width="1.500" /></svg>
      <svg viewBox="0 0 16 16"><rect x="5" width="6" height="12" rx="2" fill="#fff" /><path d="M3 9q0 5 5 5t5-5M8 14v2M5 15.500h6" fill="none" stroke="#fff" /></svg>
      <svg viewBox="0 0 16 16"><path d="M5 5h10v9H5z" fill="none" stroke="#fff" stroke-width="1.500" /><path d="M7 7h6v5H7z" fill="#fff" /><path d="M1 1v3h4V1M3 4v5h2" fill="none" stroke="#fff" /></svg>
      <svg viewBox="0 0 16 16"><g fill="none" stroke="#fff"><path d="M2 15Q2 3 15 2M6 15q0-8 9-9M9 15q0-5 6-5" /></g><circle cx="13" cy="13.500" r="1.500" fill="#fff" /></svg>
      <svg viewBox="0 0 16 16"><path d="M1 6h3l4-4v12L4 10H1zM10 5q2 3 0 6M12 3q3 5 0 10M14 1q4 7 0 14" fill="none" stroke="#fff" /></svg>
      <span class="ime">中</span>
      <span class="wubi">五</span>
      <time>22:38<br />2020/7/26</time>
    </div>
  </div>
</div>

<style>
  :global(body) { margin: 0; overflow: hidden; }
  .desktop {
    position: relative; height: 100vh; overflow: hidden; font: 12px/16px "Noto Sans", "Noto Sans CJK SC", sans-serif; color: #333;
    background: linear-gradient(rgba(20, 80, 170, .45), rgba(20, 80, 170, 0) 80px), linear-gradient(90deg, #00b0fa, #00aaf6 30%, #0092ec 54%, #066dd8 68%, #0a50c5 84%, #0a45ba);
  }
  button { font: inherit; color: inherit; background: none; border: 0; padding: 0; margin: 0; display: flex; align-items: center; justify-content: center; white-space: nowrap; }
  h1, h2, h3, p, ul { margin: 0; padding: 0; font: inherit; list-style: none; }
  .ico { width: 16px; height: 16px; flex: none; display: block; }
  .drop { width: 5px; height: 4px; color: #777; flex: none; }
  .floater { position: absolute; top: 7px; right: 16px; width: 45px; height: 20px; border-radius: 10px; background: linear-gradient(90deg, #c06bf0 40%, #5a78f5); }

  .win { position: absolute; display: flex; flex-direction: column; background: #fff; border: 1px solid #2b579a; box-sizing: border-box; box-shadow: 0 2px 10px rgba(0, 20, 60, .55); }
  .fore { left: -48px; width: calc(54.3% + 48px); top: 5px; bottom: 97px; border-bottom: 0; }
  .back { left: calc(54.3% - 35px); width: 943px; top: 12px; bottom: 108px; font-size: 11px; border-bottom: 0; border-color: #4a83c5; }

  .head { display: grid; grid-template-columns: auto auto 1fr; grid-template-rows: 38px 29px; flex: none; }
  .back .head { grid-template-rows: 38px 28px; }
  .caption { display: flex; align-items: center; min-width: 0; }
  .caption h1 { flex: 1; color: #555; white-space: nowrap; overflow: hidden; padding-left: 14px; }
  .back .caption h1 { text-align: center; color: #aaa; padding-bottom: 2px; }
  .context { margin-top: 2px; background: #fbe9ee; border-top: 4px solid #a4373a; padding: 0 14px; display: flex; align-items: center; color: #7b2b38; }
  .quick { display: flex; align-items: center; align-self: flex-start; padding-left: 35px; gap: 8px; height: 32px; }
  .quick .wide { gap: 6px; width: 28px; justify-content: flex-start; }
  .quick .sep { width: 1px; height: 20px; background: #ccc; margin: 0 -1px; }
  .quick .undo { color: #3e6c9c; }
  .full .undo { color: #b3c2d1; }
  .more { flex-direction: column; gap: 2px; }
  .more i, .scroller i { width: 5px; height: 1px; background: #666; }
  .sys { display: flex; align-self: flex-start; }
  .sys button { width: 36px; height: 28px; }
  .sys svg { width: 10px; height: 10px; }
  .tabs { display: flex; border-bottom: 1px solid #d2d2d2; }
  .tabs button { padding: 0 14px; }
  .tabs .file { width: 56px; padding: 0; background: #2b579a; color: #fff; margin-right: 3px; }
  .back .tabs { padding-right: 3px; }
  .back .tabs button { min-width: 46px; }
  .current { border: 1px solid #d2d2d2; border-bottom: 0; padding: 0 13px; color: #6b2b33; }
  .account { display: flex; align-items: center; justify-content: flex-end; gap: 10px; padding-right: 6px; border-bottom: 1px solid #d2d2d2; }
  .back .account { padding-right: 17px; }
  .account a { color: #777; text-decoration: none; }
  .fold { width: 8px; height: 5px; }

  .ribbon { display: flex; height: 100px; border-bottom: 1px solid #d2d2d2; flex: none; }
  .back .ribbon { height: 99px; }
  .group { display: flex; flex-direction: column; border-right: 1px solid #d5d5d5; margin: 2px 0 3px; flex: none; }
  .body { height: 73px; display: flex; }
  .group h3 { flex: 1; display: flex; align-items: center; justify-content: center; }
  .gallery { display: flex; border: 1px solid #e6e6e6; width: 231px; height: 63px; margin: 5px 7px 0; }
  .cell { flex-direction: column; width: 72px; gap: 3px; padding-top: 2px; }
  .cell svg { width: 30px; height: 30px; }
  .cell.hot { background: #d5def2; margin: 2px 1px; width: 70px; }
  .scroller { flex: 1; display: flex; flex-direction: column; border-left: 1px solid #e6e6e6; }
  .scroller button { flex: 1; flex-direction: column; gap: 2px; border-top: 1px solid #e6e6e6; }
  .scroller button:first-child { border-top: 0; }
  .scroller .ico { width: 8px; height: 8px; opacity: .4; filter: grayscale(1); }
  .rows { flex-direction: column; padding: 3px 9px 0; box-sizing: border-box; }
  .back .rows { padding-top: 2px; }
  .row { height: 23px; gap: 3px; justify-content: flex-start; }
  .row .drop { margin-left: 4px; }
  .row:disabled { color: #aaa; }
  .back .row { height: 22px; }
  .tall { flex-direction: column; justify-content: flex-start; padding: 5px 2px 0 4px; width: 71px; box-sizing: border-box; }
  .tall > svg { width: 31px; height: 31px; margin-bottom: 4px; flex: none; }
  .tall span { display: flex; align-items: center; gap: 2px; }
  .toolset .tall { width: 60px; padding: 5px 4px 0 8px; }
  .mini { display: grid; grid-template-columns: 22px 22px; grid-template-rows: repeat(3, 23px); padding: 3px 3px 0 0; }

  .notice { display: flex; align-items: center; flex: none; height: 33px; margin: 4px 4px 4px 0; padding-left: 26px; background: #fbf3b4; border: 1px solid #dccb8a; color: #4a4632; }
  .notice p { flex: 1; white-space: nowrap; overflow: hidden; }
  .notice button { height: 27px; width: 148px; background: #fff; border: 1px solid #999; color: #333; flex: none; box-sizing: border-box; }
  .notice .dismiss { width: 29px; border: 0; background: none; }
  .dismiss .ico { width: 10px; height: 10px; }

  .work { flex: 1; display: flex; min-height: 0; }
  .manager { width: 327px; flex: none; display: flex; flex-direction: column; }
  .back .manager { width: 361px; }
  .manager header { height: 36px; display: flex; align-items: center; gap: 3px; padding: 0 9px 0 8px; flex: none; }
  .manager h2 { flex: 1; font-size: 16px; color: #2b579a; }
  .manager header button { width: 16px; }
  .manager header .ico { width: 12px; height: 12px; }
  .paneltabs { display: flex; height: 25px; flex: none; border-top: 1px solid #e4e4e4; margin-right: 8px; }
  .paneltabs button { padding: 0 8px 0 5px; }
  .paneltabs.top { height: 20px; border-top: 0; border-bottom: 1px solid #ddd; }
  .paneltabs.top button { padding: 0 6px; }
  .paneltabs.top .active { border: 1px solid #999; border-bottom: 0; }
  .tools { padding: 1px 0 6px 23px; flex: none; }
  .fore .tools { padding-top: 2px; }
  .tools div { display: flex; height: 24px; align-items: center; }
  .tools button { width: 22px; height: 20px; }
  .tools button .ico { opacity: .55; }
  .tools button.hot { background: #b5c4e4; }
  .tools .g1 { color: #9aa5b5; font-size: 13px; }
  .tools .sep { width: 1px; height: 20px; background: #ccc; margin: 0 4px 0 3px; flex: none; }
  .arrow { width: 14px; display: flex; justify-content: center; flex: none; }
  .back .tools { padding-bottom: 5px; }
  .tree { flex: 1; display: flex; flex-direction: column; justify-content: space-between; border: 1px solid #c4c4c4; border-left: 0; margin: 0 8px 21px 0; min-height: 0; overflow: hidden; }
  .tree ul { padding: 1px 1px 0 27px; font-family: "Noto Sans CJK SC", sans-serif; }
  .tree li { display: flex; height: 16px; align-items: center; color: #111; }
  .tree li span { padding: 0 1px 0 2px; margin-left: 2px; white-space: nowrap; }
  .tree .hot { background: #d5def2; flex: 1; overflow: hidden; }
  .guide { width: 18px; height: 100%; flex: none; }
  .off { display: none; }
  .back .tree li { height: 18px; font-size: 14px; line-height: 18px; }
  .back .tree .blank { background: #ebebeb; width: 213px; height: 17px; }
  .hscroll { display: flex; height: 17px; padding-right: 1px; }
  .hscroll .thumb { flex: 67; border: 1px solid #c4c4c4; }
  .hscroll .track { flex: 33; background: #ebebeb; }
  .back .thumb { flex-grow: 61; }
  .back .track { flex-grow: 39; }
  .hscroll button { width: 17px; border: 1px solid #c4c4c4; background: #fff; box-sizing: border-box; }
  .hscroll svg { width: 6px; height: 10px; }

  .view { position: relative; flex: 1; min-width: 0; overflow: hidden; background: linear-gradient(#969eac, #a5acb8 18%, #b9bec8 35%, #d2d6dd 58%, #eeeef2 84%, #fefefe 97%); }
  .fore .view { margin-right: 1px; }
  .scene { display: block; width: 100%; height: 100%; }
  .triad text { font: bold 12px "Noto Sans", sans-serif; }
  .axis text { font: 19px "Noto Sans", sans-serif; }
  .halo { fill: rgba(150, 185, 240, .55); }
  .a .plate { fill: #d2def8; }
  .a .front { fill: #666; stroke: #111; }
  .a .edge { fill: #f4f4f6; stroke: #111; stroke-dasharray: 5 2; stroke-width: .8; }
  .loop { fill: none; stroke: #2a62b8; stroke-width: .8; }
  .chain { stroke: #d0142a; stroke-width: 2; }
  .glow { fill: none; stroke: rgba(255, 170, 180, .6); stroke-width: 5; }
  .ring { fill: #dcdbe0; stroke: #2a72d8; }
  .link { fill: rgba(240, 215, 205, .15); stroke: #8a6460; stroke-width: .9; }
  .cap { fill: #d7d5d9; stroke: #111; stroke-width: 1.2; }
  .gview { fill: rgba(175, 178, 200, .35); }
  .rapid { fill: none; stroke: #f4f47c; stroke-width: 1.5; }
  .b .plate { fill: #64708a; }
  .b .front { fill: #26303f; stroke: #111; }
  .b .edge { fill: none; stroke: #611; }
  .b .loop { stroke: #2f6fd0; opacity: .5; }
  .b .halo { fill: rgba(190, 205, 245, .55); }
  .b .ring { fill: #6b6b6e; stroke: #3b6fb8; }
  .b .link { fill: none; stroke: #2c78de; stroke-width: 2; stroke-dasharray: 8 2; opacity: .85; }
  .b .glow { stroke: rgba(255, 150, 160, .35); stroke-width: 4; }
  .b .cap { fill: #656466; }
  .b .gview { fill: rgba(92, 92, 116, .5); }

  .selbar { position: absolute; top: 6px; left: 50%; transform: translateX(-50%); display: flex; align-items: center; height: 34px; padding: 0 17px; border-radius: 17px; background: rgba(225, 230, 236, .32); }
  .selbar button { width: 22px; height: 34px; flex: none; }
  .selbar .ico { opacity: .65; }
  .selbar .soft .ico { opacity: .35; }
  .selbar .cursor { width: 48px; gap: 2px; color: #666; font-size: 12px; }
  .selbar .xyz { flex-direction: column; color: #555; font-size: 9px; line-height: 12px; }
  .selbar .xyz svg { width: 6px; height: 6px; }
  .selbar .first { border-left: 1px solid #a2a9b3; }
  .selbar .hot { background: rgba(150, 190, 215, .45); }
  .selbar .arrow { width: 16px; }
  .back .selbar { background: rgba(205, 212, 220, .3); }
  .back .selbar button:first-child, .back .selbar .xyz, .back .selbar .cursor span { opacity: .5; }
  .masks { position: absolute; top: 63px; right: 6px; display: flex; flex-direction: column; gap: 7px; }
  .masks button { width: 34px; height: 34px; box-sizing: border-box; border-radius: 50%; border: 1px solid rgba(190, 185, 192, .5); background: linear-gradient(135deg, transparent 49%, rgba(150, 150, 160, .4) 50%, transparent 52%), rgba(240, 242, 245, .5); }
  .masks .ico { opacity: .65; }
  .tip { position: absolute; left: 292px; top: 333px; background: #ffffe1; border: 1px solid #555; color: #111; font-size: 16px; line-height: 18px; padding: 0 3px; }
  .back .tip { left: 260px; top: 351px; border: 0; padding: 0 4px; }
  .scale { position: absolute; right: 22px; bottom: 8px; width: 95px; border: solid #111; border-width: 0 2px; color: #000; text-align: center; display: flex; flex-direction: column; font-size: 13px; line-height: 14px; }
  .scale b:first-child { border-bottom: 2px solid #111; }
  .back .scale { right: 33px; }

  .status { display: flex; align-items: center; height: 26px; flex: none; background: #2b579a; color: #e8edf6; padding-left: 50px; white-space: nowrap; }
  .status span { flex: none; }
  .status .arrow { width: 16px; justify-content: flex-start; }
  .status .drop { width: 4px; height: 3px; color: #8aa5cf; }
  .status button { width: 28px; height: 26px; flex: none; }
  .status .hot { background: #1c66c4; }
  .status .grip { width: 9px; height: 9px; margin: 8px 0 0 4px; }
  .back .status { height: 25px; padding-left: 18px; }

  .taskbar { position: absolute; left: -48px; right: -36px; bottom: 0; height: 40px; display: flex; background: linear-gradient(90deg, #1d3a44, #203540 40%, #1c2a42); }
  .search { width: 344px; box-sizing: border-box; background: #f1f1f1; border-top: 1px solid #fff; display: flex; }
  .search input { flex: 1; border: 0; background: none; padding: 0 0 0 40px; font: 14px/20px "Noto Sans CJK SC", sans-serif; outline: 0; }
  .search input::placeholder { color: #333; opacity: 1; }
  .taskbar > button { width: 49px; }
  .taskbar > button svg { width: 24px; height: 24px; }
  .taskbar .open { box-shadow: inset 0 -2px #76b5e6; margin: 0 4px; width: 41px; }
  .taskbar .active { background: #50626c; margin: 0; width: 49px; }
  .open text { font: italic bold 9px "Liberation Sans", sans-serif; fill: #000; stroke: #fff; stroke-width: 2px; paint-order: stroke; }
  .tray { margin-left: auto; display: flex; align-items: center; gap: 8px; color: #fff; }
  .tray svg { width: 16px; height: 16px; }
  .ime { font-size: 16px; margin-right: 8px; }
  .wubi { background: #fff; color: #111; width: 16px; text-align: center; font-weight: bold; margin-right: 8px; }
  .tray time { font-size: 12px; line-height: 19px; text-align: center; }
</style>
